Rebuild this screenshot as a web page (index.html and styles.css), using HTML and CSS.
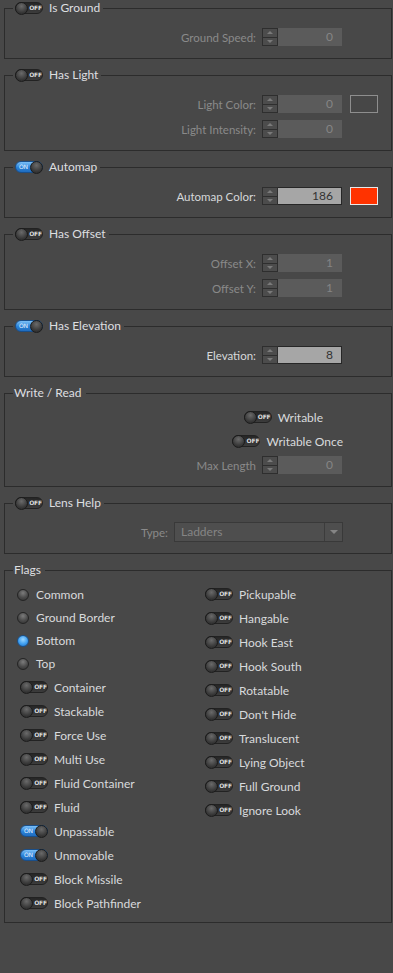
FILE: index.html
```html
<!DOCTYPE html>
<html lang="en">
<head>
    <meta charset="UTF-8">
    <meta name="viewport" content="width=device-width, initial-scale=1.0">
    <title>Item Properties</title>
    <link rel="stylesheet" href="styles.css">
</head>
<body>
    <div class="panel">

        <fieldset class="group">
            <legend><span class="toggle"><span class="knob"></span><span class="toggle-text">OFF</span></span>Is Ground</legend>
            <div class="form">
                <span class="form-label disabled">Ground Speed:</span>
                <div class="spin disabled"><div class="spin-btns"><span class="arrow-up"></span><span class="arrow-down"></span></div><div class="spin-field">0</div></div>
            </div>
        </fieldset>

        <fieldset class="group">
            <legend><span class="toggle"><span class="knob"></span><span class="toggle-text">OFF</span></span>Has Light</legend>
            <div class="form">
                <span class="form-label disabled">Light Color:</span>
                <div class="spin disabled"><div class="spin-btns"><span class="arrow-up"></span><span class="arrow-down"></span></div><div class="spin-field">0</div></div>
                <span class="swatch"></span>
                <span class="form-label disabled">Light Intensity:</span>
                <div class="spin disabled"><div class="spin-btns"><span class="arrow-up"></span><span class="arrow-down"></span></div><div class="spin-field">0</div></div>
            </div>
        </fieldset>

        <fieldset class="group">
            <legend><span class="toggle toggle-on"><span class="knob"></span><span class="toggle-text">ON</span></span>Automap</legend>
            <div class="form">
                <span class="form-label">Automap Color:</span>
                <div class="spin"><div class="spin-btns"><span class="arrow-up"></span><span class="arrow-down"></span></div><div class="spin-field">186</div></div>
                <span class="swatch swatch-red"></span>
            </div>
        </fieldset>

        <fieldset class="group">
            <legend><span class="toggle"><span class="knob"></span><span class="toggle-text">OFF</span></span>Has Offset</legend>
            <div class="form">
                <span class="form-label disabled">Offset X:</span>
                <div class="spin disabled"><div class="spin-btns"><span class="arrow-up"></span><span class="arrow-down"></span></div><div class="spin-field">1</div></div>
                <span class="form-label disabled">Offset Y:</span>
                <div class="spin disabled"><div class="spin-btns"><span class="arrow-up"></span><span class="arrow-down"></span></div><div class="spin-field">1</div></div>
            </div>
        </fieldset>

        <fieldset class="group">
            <legend><span class="toggle toggle-on"><span class="knob"></span><span class="toggle-text">ON</span></span>Has Elevation</legend>
            <div class="form">
                <span class="form-label">Elevation:</span>
                <div class="spin"><div class="spin-btns"><span class="arrow-up"></span><span class="arrow-down"></span></div><div class="spin-field">8</div></div>
            </div>
        </fieldset>

        <fieldset class="group group-rw">
            <legend class="legend-plain">Write / Read</legend>
            <div class="form form-tight">
                <div class="check-row writable"><span class="toggle"><span class="knob"></span><span class="toggle-text">OFF</span></span>Writable</div>
                <div class="check-row"><span class="toggle"><span class="knob"></span><span class="toggle-text">OFF</span></span>Writable Once</div>
                <span class="form-label disabled">Max Length</span>
                <div class="spin disabled"><div class="spin-btns"><span class="arrow-up"></span><span class="arrow-down"></span></div><div class="spin-field">0</div></div>
            </div>
        </fieldset>

        <fieldset class="group group-lens">
            <legend><span class="toggle"><span class="knob"></span><span class="toggle-text">OFF</span></span>Lens Help</legend>
            <div class="lens-row">
                <span class="form-label disabled">Type:</span>
                <div class="combo">
                    <span class="combo-text">Ladders</span>
                    <span class="combo-btn"><span class="arrow-down"></span></span>
                </div>
            </div>
        </fieldset>

        <fieldset class="group group-flags">
            <legend class="legend-plain">Flags</legend>
            <div class="flags">
                <div class="flags-col flags-left">
                    <div class="radio-row"><span class="radio"></span>Common</div>
                    <div class="radio-row"><span class="radio"></span>Ground Border</div>
                    <div class="radio-row"><span class="radio radio-checked"></span>Bottom</div>
                    <div class="radio-row"><span class="radio"></span>Top</div>
                    <div class="flag-row"><span class="toggle"><span class="knob"></span><span class="toggle-text">OFF</span></span>Container</div>
                    <div class="flag-row"><span class="toggle"><span class="knob"></span><span class="toggle-text">OFF</span></span>Stackable</div>
                    <div class="flag-row"><span class="toggle"><span class="knob"></span><span class="toggle-text">OFF</span></span>Force Use</div>
                    <div class="flag-row"><span class="toggle"><span class="knob"></span><span class="toggle-text">OFF</span></span>Multi Use</div>
                    <div class="flag-row"><span class="toggle"><span class="knob"></span><span class="toggle-text">OFF</span></span>Fluid Container</div>
                    <div class="flag-row"><span class="toggle"><span class="knob"></span><span class="toggle-text">OFF</span></span>Fluid</div>
                    <div class="flag-row"><span class="toggle toggle-on"><span class="knob"></span><span class="toggle-text">ON</span></span>Unpassable</div>
                    <div class="flag-row"><span class="toggle toggle-on"><span class="knob"></span><span class="toggle-text">ON</span></span>Unmovable</div>
                    <div class="flag-row"><span class="toggle"><span class="knob"></span><span class="toggle-text">OFF</span></span>Block Missile</div>
                    <div class="flag-row"><span class="toggle"><span class="knob"></span><span class="toggle-text">OFF</span></span>Block Pathfinder</div>
                </div>
                <div class="flags-col flags-right">
                    <div class="flag-row"><span class="toggle"><span class="knob"></span><span class="toggle-text">OFF</span></span>Pickupable</div>
                    <div class="flag-row"><span class="toggle"><span class="knob"></span><span class="toggle-text">OFF</span></span>Hangable</div>
                    <div class="flag-row"><span class="toggle"><span class="knob"></span><span class="toggle-text">OFF</span></span>Hook East</div>
                    <div class="flag-row"><span class="toggle"><span class="knob"></span><span class="toggle-text">OFF</span></span>Hook South</div>
                    <div class="flag-row"><span class="toggle"><span class="knob"></span><span class="toggle-text">OFF</span></span>Rotatable</div>
                    <div class="flag-row"><span class="toggle"><span class="knob"></span><span class="toggle-text">OFF</span></span>Don't Hide</div>
                    <div class="flag-row"><span class="toggle"><span class="knob"></span><span class="toggle-text">OFF</span></span>Translucent</div>
                    <div class="flag-row"><span class="toggle"><span class="knob"></span><span class="toggle-text">OFF</span></span>Lying Object</div>
                    <div class="flag-row"><span class="toggle"><span class="knob"></span><span class="toggle-text">OFF</span></span>Full Ground</div>
                    <div class="flag-row"><span class="toggle"><span class="knob"></span><span class="toggle-text">OFF</span></span>Ignore Look</div>
                </div>
            </div>
        </fieldset>

    </div>
</body>
</html>
```

FILE: styles.css
```css
* {
    box-sizing: border-box;
}

body {
    margin: 0;
    background-color: #484848;
    font-family: 'Lato', sans-serif;
    font-size: 11.5px;
    color: #d8dadc;
}

.panel {
    width: 388px;
    margin-left: 4px;
    padding-top: 1px;
}

/* Group boxes */

.group {
    margin: 0 0 9px;
    padding: 13px 13px 12px 0;
    border: 1px solid #2c2c2c;
    min-width: 0;
}

.group legend {
    display: flex;
    align-items: center;
    gap: 6px;
    height: 14px;
    margin-left: 8px;
    padding: 0 3px 0 2px;
    line-height: 14px;
    font-size: 12px;
    color: #dedfe0;
}

.group .legend-plain {
    padding: 0 4px 0 1px;
}

.group-rw {
    padding-top: 8px;
}

.group-lens {
    padding-top: 12px;
    padding-bottom: 11px;
}

.group-flags {
    padding-top: 5px;
    padding-bottom: 7px;
}

/* Toggle switch */

.toggle {
    display: inline-flex;
    align-items: center;
    flex-shrink: 0;
    width: 28px;
    height: 12px;
    border-radius: 6px;
    background: linear-gradient(#262626, #3c3c3c);
    border: 1px solid #222;
}

.knob {
    width: 13px;
    height: 13px;
    margin: -1px;
    border-radius: 50%;
    background: radial-gradient(circle at 50% 30%, #6a6a6a, #383838 65%, #262626);
    border: 1px solid #1c1c1c;
}

.toggle-text {
    flex: 1;
    padding-left: 2px;
    text-align: center;
    font-family: 'DejaVu Sans', sans-serif;
    font-size: 6px;
    font-weight: bold;
    letter-spacing: -0.2px;
    line-height: 10px;
    color: #dcdcdc;
}

.toggle-on {
    flex-direction: row-reverse;
    border-color: #1a4f8a;
    background: linear-gradient(#7cc0f8, #2a82d8 55%, #1f6cbf);
}

.toggle-on .toggle-text {
    padding-left: 0;
    color: #eaf4ff;
    font-weight: normal;
}

/* Form rows */

.form {
    display: grid;
    grid-template-columns: 1fr 80px 36px;
    row-gap: 7px;
    align-items: center;
}

.form-tight {
    row-gap: 6px;
}

.form-label {
    grid-column: 1;
    justify-self: end;
    padding-right: 6px;
    color: #d6d8da;
}

.form-label.disabled {
    color: #8a8a8a;
}

.spin {
    display: flex;
    grid-column: 2;
    height: 18px;
}

.spin-btns {
    display: flex;
    flex-direction: column;
    width: 16px;
    border: 1px solid #2e2e2e;
    background-color: #4c4c4c;
}

.spin-btns span {
    flex: 1;
}

.arrow-up,
.arrow-down {
    display: flex;
    align-items: center;
    justify-content: center;
}

.spin-btns .arrow-up {
    border-bottom: 1px solid #2e2e2e;
}

.arrow-up::before,
.arrow-down::before {
    content: '';
    border-left: 3px solid transparent;
    border-right: 3px solid transparent;
}

.arrow-up::before {
    border-bottom: 3px solid #7a7a7a;
}

.arrow-down::before {
    border-top: 3px solid #7a7a7a;
}

.spin-field {
    flex: 1;
    padding-right: 8px;
    line-height: 16px;
    text-align: right;
    font-size: 12px;
    background-color: #a6a6a6;
    color: #333;
    border: 1px solid #262626;
    border-left: none;
}

.spin.disabled .spin-field {
    background-color: #5b5b5b;
    color: #858585;
    border-color: #5b5b5b;
}

.swatch {
    grid-column: 3;
    justify-self: end;
    width: 28px;
    height: 18px;
    border: 1px solid #8e8e8e;
    background-color: #474747;
}

.swatch-red {
    background-color: #ff3300;
    border-color: #e8e8e8;
}

.check-row {
    grid-column: 1 / 3;
    justify-self: end;
    display: flex;
    align-items: center;
    gap: 6px;
    height: 18px;
    margin-right: -1px;
    font-size: 12px;
}

.check-row.writable {
    margin-right: 19px;
}

/* Combo box */

.lens-row {
    display: flex;
    justify-content: flex-end;
    align-items: center;
    padding-right: 35px;
}

.combo {
    display: flex;
    width: 169px;
    height: 20px;
    border: 1px solid #393939;
    background-color: #4e4e4e;
}

.combo-text {
    flex: 1;
    padding-left: 6px;
    line-height: 18px;
    font-size: 12px;
    color: #858585;
}

.combo-btn {
    display: flex;
    align-items: center;
    justify-content: center;
    width: 18px;
    border-left: 1px solid #3c3c3c;
}

.combo-btn .arrow-down::before {
    border-left-width: 4px;
    border-right-width: 4px;
    border-top-width: 4px;
    border-top-color: #858585;
}

/* Flags */

.flags {
    display: grid;
    grid-template-columns: 200px 1fr;
    align-items: start;
    font-size: 12px;
}

.flags-col {
    display: flex;
    flex-direction: column;
}

.flags-left {
    margin-top: 1px;
    padding-left: 12px;
}

.flags-left .flag-row {
    padding-left: 3px;
}

.radio-row {
    display: flex;
    align-items: center;
    gap: 7px;
    height: 23px;
}

.flag-row {
    display: flex;
    align-items: center;
    gap: 6px;
    height: 24px;
}

.radio {
    flex-shrink: 0;
    width: 12px;
    height: 12px;
    border-radius: 50%;
    border: 1px solid #242424;
    background: radial-gradient(circle at 50% 30%, #7c7c7c, #4a4a4a 55%, #303030);
}

.radio-checked {
    border-color: #1b4f86;
    background: radial-gradient(circle at 50% 35%, #9ad6ff, #3f9ff0 55%, #1f6cc0);
}
```
